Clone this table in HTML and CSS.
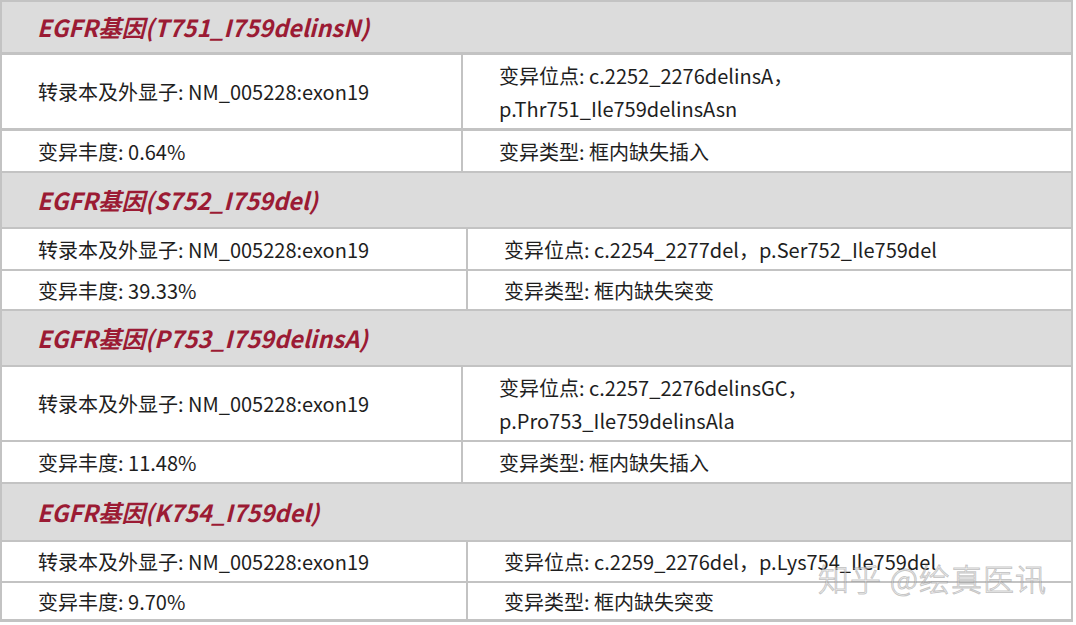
FILE: index.html
```html
<!DOCTYPE html>
<html lang="zh-CN">
<head>
<meta charset="utf-8">
<title>EGFR</title>
<link rel="stylesheet" href="styles.css">
</head>
<body>
<div class="page">
  <section class="sec sec-a s1">
    <div class="hd">EGFR基因(T751_I759delinsN)</div>
    <div class="row r1">
      <div class="cell">转录本及外显子: NM_005228:exon19</div>
      <div class="cell right two">变异位点: c.2252_2276delinsA，<br>p.Thr751_Ile759delinsAsn</div>
    </div>
    <div class="row r2">
      <div class="cell">变异丰度: 0.64%</div>
      <div class="cell right">变异类型: 框内缺失插入</div>
    </div>
  </section>
  <section class="sec sec-b s2">
    <div class="hd">EGFR基因(S752_I759del)</div>
    <div class="row r1">
      <div class="cell">转录本及外显子: NM_005228:exon19</div>
      <div class="cell right">变异位点: c.2254_2277del，p.Ser752_Ile759del</div>
    </div>
    <div class="row r2">
      <div class="cell">变异丰度: 39.33%</div>
      <div class="cell right">变异类型: 框内缺失突变</div>
    </div>
  </section>
  <section class="sec sec-a s3">
    <div class="hd">EGFR基因(P753_I759delinsA)</div>
    <div class="row r1">
      <div class="cell">转录本及外显子: NM_005228:exon19</div>
      <div class="cell right two">变异位点: c.2257_2276delinsGC，<br>p.Pro753_Ile759delinsAla</div>
    </div>
    <div class="row r2">
      <div class="cell">变异丰度: 11.48%</div>
      <div class="cell right">变异类型: 框内缺失插入</div>
    </div>
  </section>
  <section class="sec sec-b s4">
    <div class="hd">EGFR基因(K754_I759del)</div>
    <div class="row r1">
      <div class="cell">转录本及外显子: NM_005228:exon19</div>
      <div class="cell right">变异位点: c.2259_2276del，p.Lys754_Ile759del</div>
    </div>
    <div class="row r2">
      <div class="cell">变异丰度: 9.70%</div>
      <div class="cell right">变异类型: 框内缺失突变</div>
    </div>
  </section>
  <div class="watermark">知乎 @绘真医讯</div>
</div>
</body>
</html>
```

FILE: styles.css
```css
* { box-sizing: border-box; }
html, body { margin: 0; padding: 0; background: #ffffff; }
body {
  font-family: "Noto Sans CJK SC", "Noto Sans", sans-serif;
  color: #1e1e1e;
}
.page {
  position: relative;
  width: 1073px;
  height: 625px;
}
.sec {
  border: 2px solid #c3c3c3;
  border-bottom: 0;
}
.hd {
  background: #dcdcdc;
  border-bottom: 2px solid #c3c3c3;
  display: flex;
  align-items: center;
  padding-left: 35px;
  font-size: 23.5px;
  font-weight: 700;
  font-style: italic;
  color: #9b1b34;
}
.row {
  display: grid;
  grid-template-columns: 459px 1fr;
  border-bottom: 2px solid #c3c3c3;
}
.sec-b .row { grid-template-columns: 464px 1fr; }

.s1 .hd { height: 53px; border-bottom-width: 3px; }
.s1 .r1 { height: 76px; border-bottom-width: 3px; }
.s1 .r2 { height: 40px; border-bottom: 0; }

.s2 .hd { height: 56px; }
.s2 .r1 { height: 42px; }
.s2 .r2 { height: 38px; border-bottom: 0; }

.s3 .hd { height: 56px; }
.s3 .r1 { height: 75px; }
.s3 .r2 { height: 40px; border-bottom: 0; }

.s4 .hd { height: 58px; }
.s4 .r1 { height: 41px; }
.s4 .r2 { height: 39px; border-bottom-width: 3px; }

.cell {
  display: flex;
  align-items: center;
  padding-left: 36px;
  font-size: 20px;
  line-height: 33px;
  white-space: nowrap;
}
.cell.right {
  border-left: 2px solid #c3c3c3;
  padding-left: 36px;
}
.cell.two { display: block; padding-top: 4px; }
.watermark {
  position: absolute;
  left: 818px;
  top: 555px;
  font-size: 31px;
  letter-spacing: 1px;
  color: rgba(255, 255, 255, 0.55);
  -webkit-text-stroke: 1px rgba(110, 110, 110, 0.4);
  white-space: nowrap;
  font-family: "Noto Sans CJK SC", sans-serif;
  font-weight: 300;
}
```
